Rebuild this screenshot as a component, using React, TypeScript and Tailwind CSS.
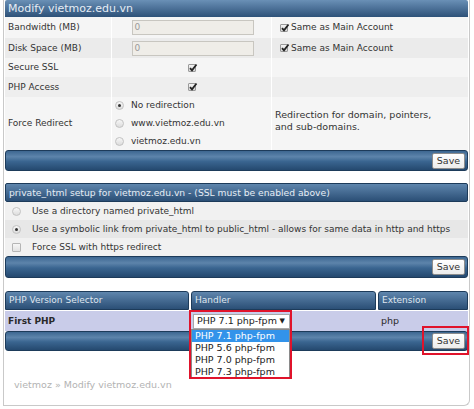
import React from "react";

const font = { fontFamily: '"DejaVu Sans", Verdana, sans-serif' };

function Check() {
  return (
    <span className="inline-block w-[8px] h-[8px] border border-[#9a9a9a] bg-gradient-to-b from-[#f4f4f4] to-[#d8d8d8] rounded-[1px] relative shrink-0">
      <svg viewBox="0 0 10 10" className="absolute left-[-1px] top-[-2px] w-[10px] h-[10px]">
        <path d="M2 5.2 L4 7.4 L8.5 1.5" stroke="#222" strokeWidth="1.8" fill="none" />
      </svg>
    </span>
  );
}

function EmptyBox() {
  return (
    <span className="inline-block w-[9px] h-[9px] border border-[#b5b5b5] bg-gradient-to-b from-[#f6f6f6] to-[#e2e2e2] rounded-[1px] shrink-0" />
  );
}

function Radio({ on }: { on?: boolean }) {
  return (
    <span className="inline-flex items-center justify-center w-[9px] h-[9px] rounded-full border border-[#c2c2c2] bg-gradient-to-b from-[#f7f7f7] to-[#dcdcdc] shrink-0">
      {on && <span className="w-[3px] h-[3px] rounded-full bg-[#333]" />}
    </span>
  );
}

function SaveBtn() {
  return (
    <button className="h-[16px] w-[33px] bg-gradient-to-b from-white to-[#ececec] border border-[#8c8c8c] rounded-[2px] text-[9.5px] text-[#333] leading-none">
      Save
    </button>
  );
}

function Bar({ h, children }: { h: string; children?: React.ReactNode }) {
  return (
    <div
      className={`${h} flex items-center justify-end pr-[2px] rounded-[3px] border border-[#1d3b5a] bg-[linear-gradient(to_bottom,#3d6791_0%,#5d84ab_30%,#3a6590_55%,#25496f_100%)]`}
    >
      {children}
    </div>
  );
}

function Row1({
  label,
  bg,
  h,
  mid,
  right,
}: {
  label: string;
  bg: string;
  h: string;
  mid?: React.ReactNode;
  right?: React.ReactNode;
}) {
  return (
    <div className={`grid grid-cols-[106px_159px_1fr] gap-x-px bg-white ${h}`}>
      <div className={`${bg} flex items-center pl-[3px]`}>{label}</div>
      <div className={`${bg} flex items-center justify-center`}>{mid}</div>
      <div className={`${bg} flex items-center pl-[3px]`}>{right}</div>
    </div>
  );
}

export default function App() {
  return (
    <div className="w-[474px] h-[409px] bg-white overflow-hidden text-[9px] text-[#333] leading-none" style={font}>
      <div className="ml-[3px] w-[467px] h-[406px] border-l border-r border-b border-[#c9c9c9] rounded-br-[6px] px-px relative">
        {/* Section 1 */}
        <div className="h-[17px] flex items-center pl-[3px] text-[11px] text-[#e6edf5] rounded-t-[2px] bg-gradient-to-b from-[#6a90b6] to-[#2e5279]">
          Modify vietmoz.edu.vn
        </div>
        <Row1
          label="Bandwidth (MB)"
          bg="bg-[#f5f5f5]"
          h="h-[21px]"
          mid={
            <div className="w-[122px] h-[15px] ml-[2px] bg-[#efede8] border border-[#c8c6c0] flex items-center pl-[2px] text-[#9a9a9a]">
              0
            </div>
          }
          right={
            <div className="flex items-center gap-[3px] ml-[5px]">
              <Check />
              <span>Same as Main Account</span>
            </div>
          }
        />
        <Row1
          label="Disk Space (MB)"
          bg="bg-[#ebebeb]"
          h="h-[20px]"
          mid={
            <div className="w-[122px] h-[15px] ml-[2px] bg-[#efede8] border border-[#c8c6c0] flex items-center pl-[2px] text-[#9a9a9a]">
              0
            </div>
          }
          right={
            <div className="flex items-center gap-[3px] ml-[5px]">
              <Check />
              <span>Same as Main Account</span>
            </div>
          }
        />
        <Row1 label="Secure SSL" bg="bg-[#f5f5f5]" h="h-[19px]" mid={<Check />} />
        <Row1 label="PHP Access" bg="bg-[#eeeeee]" h="h-[20px]" mid={<Check />} />
        <div className="grid grid-cols-[106px_159px_1fr] gap-x-px bg-white h-[53px]">
          <div className="bg-[#f5f5f5] flex items-center pl-[3px]">Force Redirect</div>
          <div className="bg-[#f5f5f5] flex flex-col justify-center gap-[9px] pl-[3px] pb-[1px]">
            <div className="flex items-center gap-[7px]">
              <Radio on />
              <span>No redirection</span>
            </div>
            <div className="flex items-center gap-[7px]">
              <Radio />
              <span>www.vietmoz.edu.vn</span>
            </div>
            <div className="flex items-center gap-[7px]">
              <Radio />
              <span>vietmoz.edu.vn</span>
            </div>
          </div>
          <div className="bg-[#f5f5f5] flex flex-col justify-center pl-[3px] leading-[12px] pb-[6px] text-[9.5px]">
            <span>Redirection for domain, pointers,</span>
            <span>and sub-domains.</span>
          </div>
        </div>
        <Bar h="h-[21px]">
          <SaveBtn />
        </Bar>

        <div className="h-[12px]" />

        {/* Section 2 */}
        <div className="h-[19px] flex items-center pl-[3px] text-[9.2px] text-[#e6edf5] rounded-[2px] border border-[#1d3b5a] bg-gradient-to-b from-[#5f86ad] to-[#2b4f76]">
          private_html setup for vietmoz.edu.vn - (SSL must be enabled above)
        </div>
        <div className="h-[18px] bg-[#f1f1f1] flex items-center pl-[7px] gap-[11px]">
          <Radio />
          <span>Use a directory named private_html</span>
        </div>
        <div className="h-[18px] bg-[#e7e7e7] flex items-center pl-[7px] gap-[11px]">
          <Radio on />
          <span>Use a symbolic link from private_html to public_html - allows for same data in http and https</span>
        </div>
        <div className="h-[18px] bg-[#f1f1f1] flex items-center pl-[7px] gap-[11px]">
          <EmptyBox />
          <span>Force SSL with https redirect</span>
        </div>
        <Bar h="h-[22px]">
          <SaveBtn />
        </Bar>

        <div className="h-[13px]" />

        {/* PHP table */}
        <div className="relative">
          <div className="grid grid-cols-[184px_185px_1fr] gap-x-[2px] h-[19px]">
            {["PHP Version Selector", "Handler", "Extension"].map((t) => (
              <div
                key={t}
                className="rounded-t-[3px] flex items-center pl-[3px] text-[9px] text-[#dfe6ef] border border-[#1d3b5a] bg-gradient-to-b from-[#5f86ad] to-[#2b4f76]"
              >
                {t}
              </div>
            ))}
          </div>
          <div className="grid grid-cols-[184px_185px_1fr] gap-x-[2px] h-[20px] bg-[#c9cce9] mt-px">
            <div className="flex items-center pl-[3px] text-[9px] font-semibold text-[#2a2a2a]">First PHP</div>
            <div className="flex items-center pl-[2px]">
              <div className="w-[97px] h-[15px] bg-white border border-[#a8a8a8] flex items-center justify-between pl-[3px] pr-[4px] text-[9.5px] text-[#222]">
                <span>PHP 7.1 php-fpm</span>
                <span className="text-[7px]">▼</span>
              </div>
            </div>
            <div className="flex items-center pl-[3px] text-[9.5px] text-[#2a2a2a]">php</div>
          </div>
          <Bar h="h-[20px]">
            <SaveBtn />
          </Bar>

          {/* dropdown overlay */}
          <div className="absolute left-[186px] top-[38px] w-[99px] bg-white border border-[#8a8a8a] text-[9.5px] text-[#222]">
            {["PHP 7.1 php-fpm", "PHP 5.6 php-fpm", "PHP 7.0 php-fpm", "PHP 7.3 php-fpm"].map((t, i) => (
              <div
                key={t}
                className={`h-[12px] flex items-center pl-[3px] ${i === 0 ? "bg-[#3393ea] text-white" : ""}`}
              >
                {t}
              </div>
            ))}
          </div>
          {/* red highlight boxes */}
          <div className="absolute left-[184px] top-[19px] w-[103px] h-[69px] border-2 border-[#e0132b] pointer-events-none" />
          <div className="absolute left-[417px] top-[35px] w-[47px] h-[29px] border-2 border-[#e0132b] pointer-events-none" />
        </div>

        <div className="mt-[29px] pl-[9px] text-[9.5px] text-[#b3b3b3]">vietmoz » Modify vietmoz.edu.vn</div>
      </div>
    </div>
  );
}
